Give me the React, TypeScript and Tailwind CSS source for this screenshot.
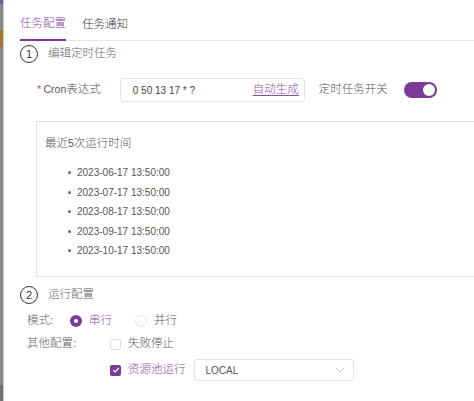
import React from "react";

const FONT = { fontFamily: '"Liberation Sans", "Noto Sans CJK SC", sans-serif' };
const P = "#7b3a98";

function StepCircle({ n }: { n: string }) {
  return (
    <div className="flex h-[18px] w-[18px] items-center justify-center rounded-full border-[1.5px] border-[#333] text-[11px] font-normal leading-none text-[#333]">
      {n}
    </div>
  );
}

export default function App() {
  const dates = [
    "2023-06-17 13:50:00",
    "2023-07-17 13:50:00",
    "2023-08-17 13:50:00",
    "2023-09-17 13:50:00",
    "2023-10-17 13:50:00",
  ];
  return (
    <div className="flex h-[401px] w-[474px] overflow-hidden bg-white text-[11.5px] font-light text-[#666]" style={FONT}>
      {/* left strip */}
      <div className="flex w-[3px] shrink-0 flex-col">
        <div className="h-[4px] bg-[#5b6994]" />
        <div className="h-[26px] bg-[#8a8a8a]" />
        <div className="h-[17px] bg-[#a8742e]" />
        <div className="flex-1 bg-[#8a8a8a]" />
        <div className="h-[16px] bg-[#707070]" />
      </div>
      <div className="w-[1px] shrink-0 bg-[#c8c8c8]" />
      <div className="flex min-w-0 flex-1 flex-col pl-[15px]">
        {/* tabs */}
        <div className="flex h-[41px] shrink-0 border-b border-[#e6e6e6]">
          <div
            className="-mb-px ml-[1px] flex h-[41px] w-[46px] items-center whitespace-nowrap border-b-2 pt-[9px] text-[11.5px] text-[#8a4da6]"
            style={{ borderColor: P }}
          >
            任务配置
          </div>
          <div className="ml-[16px] flex h-[40px] items-center whitespace-nowrap pt-[9px] text-[11.5px] text-[#333]">任务通知</div>
        </div>

        {/* step 1 */}
        <div className="ml-[1px] mt-[4px] flex items-center">
          <StepCircle n="1" />
          <span className="ml-[10px] text-[#666]">编辑定时任务</span>
        </div>

        {/* cron row */}
        <div className="mt-[15px] flex h-[24px] items-center">
          <span className="ml-[18px] text-[#e05050]">*</span>
          <span className="ml-[2px] text-[#555]">
            <span className="text-[10.5px]">Cron</span>表达式
          </span>
          <div className="ml-[19px] flex h-[24px] w-[185px] items-center justify-between rounded-[3px] border border-[#e6e6e6] pl-[12px] pr-[5px]">
            <span className="text-[10px] font-normal text-[#444]">0 50 13 17 * ?</span>
            <span className="text-[#8a4da6] underline underline-offset-2">自动生成</span>
          </div>
          <span className="ml-[14px] text-[#555]">定时任务开关</span>
          <div className="ml-[16px] flex h-[16px] w-[33px] items-center justify-end rounded-full pr-[2px]" style={{ backgroundColor: P }}>
            <div className="h-[12px] w-[12px] rounded-full bg-white" />
          </div>
        </div>

        {/* recent runs box */}
        <div className="-mr-[4px] ml-[17px] mt-[19px] h-[156px] shrink-0 border border-[#e0e0e0] pl-[8px] pt-[13px]">
          <div className="h-[16px] leading-[16px] text-[#555]">
            最近<span className="text-[10.5px]">5</span>次运行时间
          </div>
          <ul className="mt-[12px]">
            {dates.map((d) => (
              <li key={d} className="flex h-[19.5px] items-center">
                <span className="ml-[23px] h-[3px] w-[3px] rounded-full bg-[#666]" />
                <span className="ml-[6px] text-[10px] font-normal text-[#555]">{d}</span>
              </li>
            ))}
          </ul>
        </div>

        {/* step 2 */}
        <div className="ml-[1px] mt-[9px] flex items-center">
          <StepCircle n="2" />
          <span className="ml-[10px] text-[#666]">运行配置</span>
        </div>

        {/* mode */}
        <div className="mt-[7px] flex h-[20px] items-center">
          <span className="ml-[8px] w-[43px] text-[#666]">模式:</span>
          <div className="flex h-[12px] w-[12px] items-center justify-center rounded-full" style={{ backgroundColor: P }}>
            <div className="h-[4px] w-[4px] rounded-full bg-white" />
          </div>
          <span className="ml-[7px] text-[#8a4da6]">串行</span>
          <div className="ml-[23px] h-[12px] w-[12px] rounded-full border border-[#e4e4e4]" />
          <span className="ml-[7px] text-[#555]">并行</span>
        </div>

        {/* other */}
        <div className="mt-[3px] flex h-[20px] items-center">
          <span className="ml-[8px] w-[83px] text-[#666]">其他配置:</span>
          <div className="h-[11px] w-[11px] rounded-[2px] border border-[#dcdcdc]" />
          <span className="ml-[7px] text-[#555]">失败停止</span>
        </div>

        <div className="mt-[5px] flex h-[22px] items-center">
          <div className="ml-[91px] flex h-[11px] w-[11px] items-center justify-center rounded-[2px]" style={{ backgroundColor: P }}>
            <svg width="8" height="8" viewBox="0 0 8 8">
              <path d="M1.3 4.2 L3.2 6 L6.8 2" fill="none" stroke="white" strokeWidth="1.2" />
            </svg>
          </div>
          <span className="ml-[7px] text-[#8a4da6]">资源池运行</span>
          <div className="ml-[8px] flex h-[22px] w-[160px] items-center justify-between rounded-[3px] border border-[#e2e2e2] pl-[11px] pr-[8px]">
            <span className="text-[10px] font-normal text-[#555]">LOCAL</span>
            <svg width="10" height="6" viewBox="0 0 10 6">
              <path d="M1 1 L5 5 L9 1" fill="none" stroke="#c8c8c8" strokeWidth="1" />
            </svg>
          </div>
        </div>
      </div>
    </div>
  );
}
